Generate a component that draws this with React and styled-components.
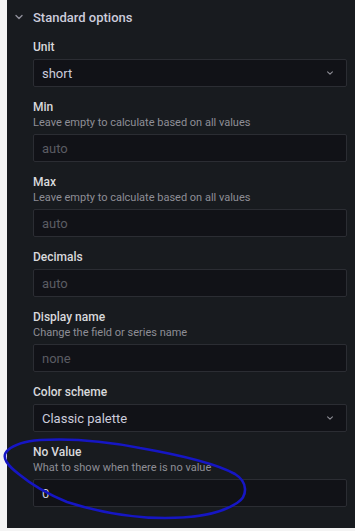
import React from 'react';
import styled, { createGlobalStyle } from 'styled-components';

const GlobalStyle = createGlobalStyle`
  html, body {
    margin: 0;
    padding: 0;
    background: #f4f4f4;
  }
  body {
    font-family: Roboto, Inter, "Noto Sans", sans-serif;
    -webkit-font-smoothing: antialiased;
  }
`;

// Whole screenshot area: white gutter on the left, dark options pane next to it
const Page = styled.div`
  position: relative;
  width: 355px;
  height: 531px;
  display: flex;
  overflow: hidden;
`;

const Pane = styled.div`
  margin-left: 7px;
  flex: 1;
  height: 528px;
  background: #181b1f;
  padding: 0 8px 0 26px;
  box-sizing: border-box;
`;

const SectionHeader = styled.div`
  display: flex;
  align-items: center;
  height: 34px;
  margin-left: -19px;
  gap: 9px;
  color: #ccccdc;
  font-size: 13px;
  font-weight: 500;
`;

const Caret = styled.svg`
  width: 10px;
  height: 10px;
  flex-shrink: 0;
  color: #8e8e9a;
`;

const Fields = styled.div`
  display: flex;
  flex-direction: column;
  gap: 13px;
  padding-top: 6px;
`;

const Field = styled.div`
  display: flex;
  flex-direction: column;
`;

const Label = styled.div`
  font-size: 12px;
  font-weight: 500;
  line-height: 15px;
  color: #d8d9dc;
`;

const Description = styled.div`
  font-size: 11px;
  line-height: 15px;
  color: #8e8e96;
`;

const Box = styled.div`
  margin-top: 4px;
  height: 28px;
  box-sizing: border-box;
  background: #111217;
  border: 1px solid #2b2d33;
  border-radius: 2px;
  display: flex;
  align-items: center;
  justify-content: space-between;
  padding: 0 12px 0 8px;
  font-size: 13px;
  color: ${p => (p.$placeholder ? '#5b5c63' : '#ccccdc')};
`;

const Chevron = styled.svg`
  width: 8px;
  height: 8px;
  color: #8e8e96;
`;

// Blue hand-drawn marker circling the "No Value" field
const Scribble = styled.svg`
  position: absolute;
  left: 0;
  top: 0;
  width: 355px;
  height: 531px;
  pointer-events: none;
`;

const DownIcon = ({ as: Comp }) => (
  <Comp viewBox="0 0 10 10">
    <path d="M2 3.5 L5 6.5 L8 3.5" fill="none" stroke="currentColor" strokeWidth="1.4" strokeLinecap="round" strokeLinejoin="round" />
  </Comp>
);

const fields = [
  { label: 'Unit', value: 'short', select: true },
  { label: 'Min', desc: 'Leave empty to calculate based on all values', value: 'auto', placeholder: true },
  { label: 'Max', desc: 'Leave empty to calculate based on all values', value: 'auto', placeholder: true },
  { label: 'Decimals', value: 'auto', placeholder: true },
  { label: 'Display name', desc: 'Change the field or series name', value: 'none', placeholder: true },
  { label: 'Color scheme', value: 'Classic palette', select: true },
  { label: 'No Value', desc: 'What to show when there is no value', value: '0' },
];

export default function App() {
  return (
    <>
      <GlobalStyle />
      <Page>
        <Pane>
          <SectionHeader>
            <DownIcon as={Caret} />
            Standard options
          </SectionHeader>
          <Fields>
            {fields.map(f => (
              <Field key={f.label}>
                <Label>{f.label}</Label>
                {f.desc && <Description>{f.desc}</Description>}
                <Box $placeholder={f.placeholder}>
                  <span>{f.value}</span>
                  {f.select && <DownIcon as={Chevron} />}
                </Box>
              </Field>
            ))}
          </Fields>
        </Pane>
        <Scribble viewBox="0 0 355 531">
          <path
            d="M40 440 C75 438 110 442 140 448 C180 455 215 463 235 474 C248 482 248 496 237 503 C222 513 195 518 165 518 C130 518 95 511 67 502 C50 495 32 485 20 475 C8 466 0 457 8 450 C16 443 28 441 40 440"
            fill="none"
            stroke="#1616c4"
            strokeWidth="2.6"
            strokeLinecap="round"
          />
        </Scribble>
      </Page>
    </>
  );
}
